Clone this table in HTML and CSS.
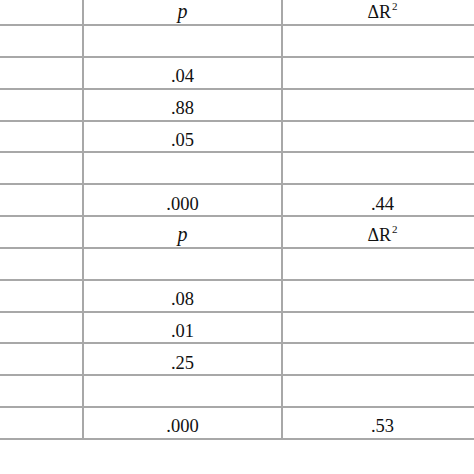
FILE: index.html
```html
<!DOCTYPE html>
<html>
<head>
<meta charset="utf-8">
<link rel="stylesheet" href="styles.css">
</head>
<body>
<div class="tbl">
  <div class="row first"><div class="c c1"></div><div class="c c2"><i>p</i></div><div class="c c3"><span class="dr">ΔR<sup>2</sup></span></div></div>
  <div class="row"><div class="c c1"></div><div class="c c2"></div><div class="c c3"></div></div>
  <div class="row"><div class="c c1"></div><div class="c c2">.04</div><div class="c c3"></div></div>
  <div class="row"><div class="c c1"></div><div class="c c2">.88</div><div class="c c3"></div></div>
  <div class="row"><div class="c c1"></div><div class="c c2">.05</div><div class="c c3"></div></div>
  <div class="row"><div class="c c1"></div><div class="c c2"></div><div class="c c3"></div></div>
  <div class="row"><div class="c c1"></div><div class="c c2">.000</div><div class="c c3">.44</div></div>
  <div class="row"><div class="c c1"></div><div class="c c2"><i>p</i></div><div class="c c3"><span class="dr">ΔR<sup>2</sup></span></div></div>
  <div class="row"><div class="c c1"></div><div class="c c2"></div><div class="c c3"></div></div>
  <div class="row"><div class="c c1"></div><div class="c c2">.08</div><div class="c c3"></div></div>
  <div class="row"><div class="c c1"></div><div class="c c2">.01</div><div class="c c3"></div></div>
  <div class="row"><div class="c c1"></div><div class="c c2">.25</div><div class="c c3"></div></div>
  <div class="row"><div class="c c1"></div><div class="c c2"></div><div class="c c3"></div></div>
  <div class="row"><div class="c c1"></div><div class="c c2">.000</div><div class="c c3">.53</div></div>
</div>
</body>
</html>
```
FILE: styles.css
```css
html, body {
  margin: 0;
  padding: 0;
  background: #fff;
}
.tbl {
  width: 474px;
  font-family: "Liberation Serif", "DejaVu Serif", serif;
  color: #111;
  font-size: 18.5px;
}
.row {
  display: grid;
  grid-template-columns: 84px 199px 1fr;
  height: 31.85px;
  box-sizing: border-box;
  border-bottom: 2px solid #a8a8a8;
}
.row.first {
  height: 26px;
}
.c {
  display: flex;
  align-items: flex-end;
  justify-content: center;
  line-height: 1;
  padding-bottom: 2px;
}
.c1, .c2 {
  border-right: 2px solid #a8a8a8;
}
.c3 {
  padding-left: 8px;
}
.c i {
  font-size: 20px;
  padding-bottom: 1px;
}
.dr {
  font-size: 18px;
  padding-bottom: 1px;
}
.dr sup {
  font-size: 11px;
  vertical-align: 0;
  position: relative;
  top: -8px;
  margin-left: 1px;
}
```
